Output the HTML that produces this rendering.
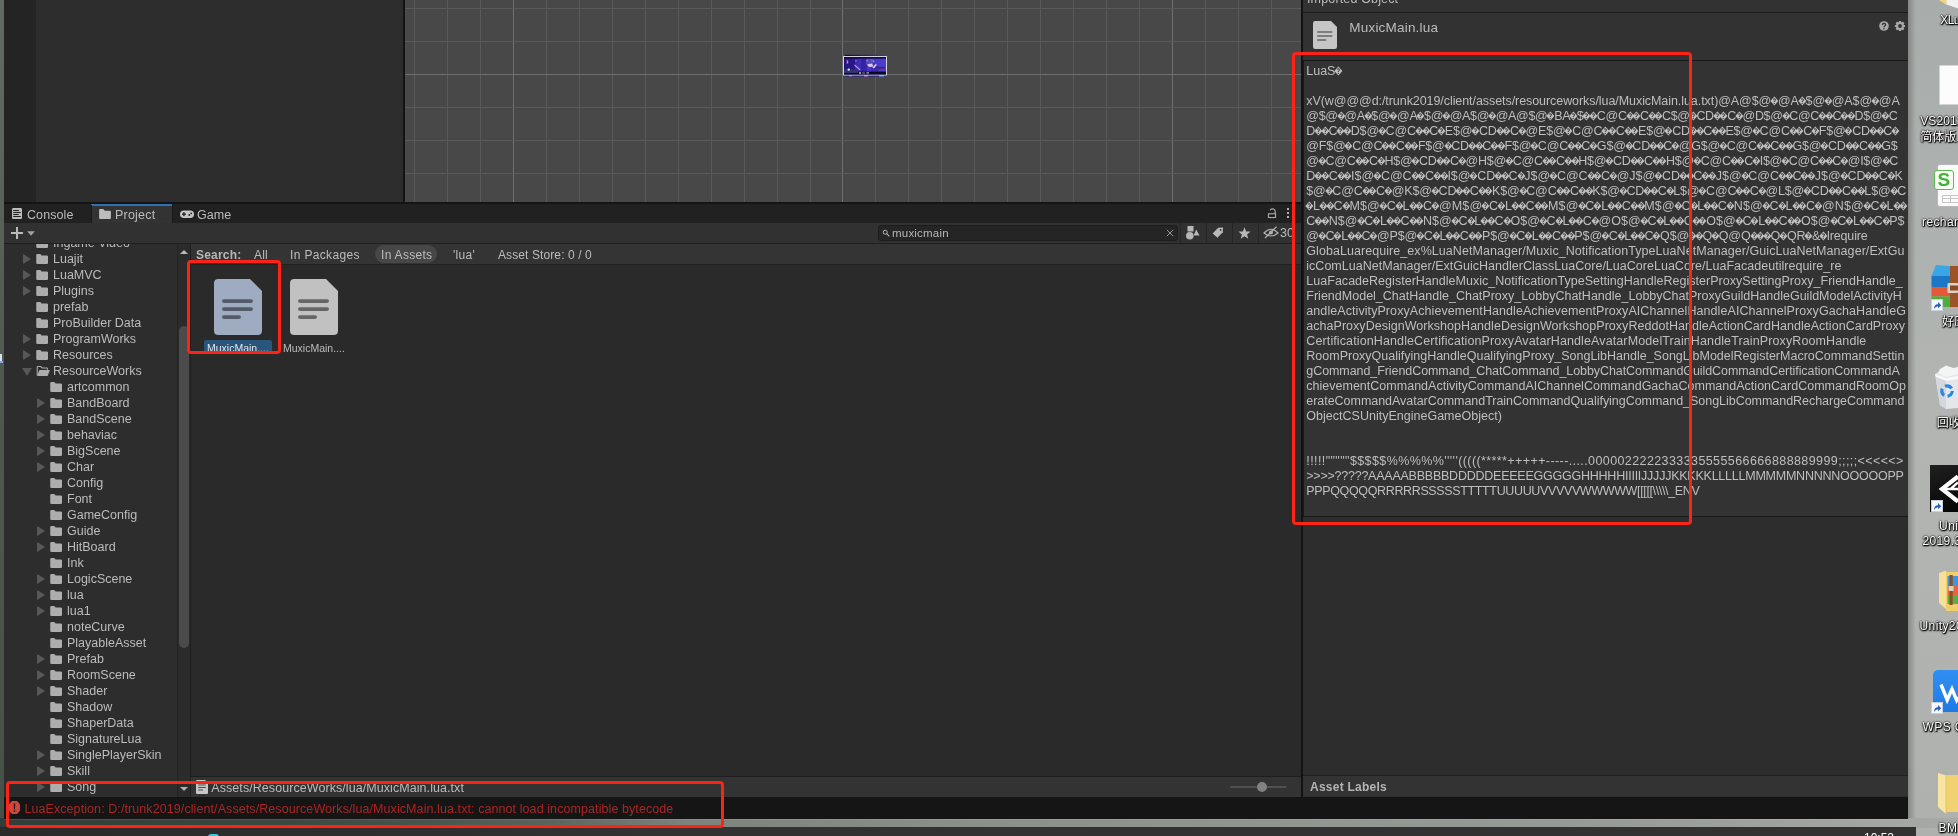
<!DOCTYPE html>
<html lang="en"><head><meta charset="utf-8"><title>Unity</title>
<style>
*{box-sizing:border-box;margin:0;padding:0}
html,body{width:1958px;height:836px;overflow:hidden;background:#9fa49e}
body{position:relative;font-family:"Liberation Sans", "Noto Sans CJK SC", sans-serif;font-size:12.5px;color:#bcbcbc;line-height:16px}
#root{position:absolute;left:0;top:0;width:1958px;height:836px;overflow:hidden;will-change:transform}
.a{position:absolute}
.t{position:absolute;white-space:pre;line-height:16px;height:16px}
.row{position:absolute;left:0;width:173px;height:16px}
.row .ar{position:absolute;top:3px;width:0;height:0;border-left:8px solid #585858;border-top:5px solid transparent;border-bottom:5px solid transparent}
.row .fo{position:absolute;top:3px;width:12.3px;height:10px}
.row .tx{position:absolute;top:0;white-space:pre;letter-spacing:0}
.il{position:absolute;left:1306.3px;white-space:pre;height:15px;line-height:15px;color:#bfbfbf;font-size:12.5px}
.il i{display:inline-block;width:6.7px;font-style:normal;transform:translate(-1px,-.3px) scale(.7,.8);transform-origin:0 58%;letter-spacing:0}
.red{position:absolute;border:3.2px solid #fb2417;border-radius:4px}
.dl{position:absolute;white-space:pre;color:#fff;font-size:12px;line-height:16px;letter-spacing:.45px;text-shadow:0 1px 2px #000,0 0 2px #000,1px 1px 1px #000,0 0 1px #000}
</style></head>
<body>
<div id="root">
<div class="a" style="left:0;top:0;width:5px;height:836px;background:linear-gradient(180deg,#626a64 0,#58625a 25%,#4e5a50 45%,#465046 100%)"></div>
<div class="a" style="left:1907px;top:0;width:51px;height:836px;background:linear-gradient(180deg,#a8adac 0,#b2b5b2 50%,#aeb1ad 100%)"></div>
<div class="a" style="left:1907px;top:0;width:9px;height:827px;background:linear-gradient(90deg,rgba(120,124,120,.85),rgba(150,154,150,0))"></div>
<div class="a" style="left:0;top:818px;width:1958px;height:10px;background:linear-gradient(90deg,#333d37 0,#3c4840 15%,#4a554d 22%,#5a645c 28%,#7c837d 35%,#8a908a 50%,#969a96 80%,#a6a9a5 100%)"></div>
<div class="a" style="left:4px;top:819px;width:1904px;height:1px;background:rgba(255,255,255,.1)"></div>
<div class="a" style="left:0;top:827px;width:1916px;height:9px;background:linear-gradient(90deg,#2a2a2a,#323232 35%)"></div>
<div class="a" style="left:208px;top:834px;width:11px;height:3px;background:#35c8e8;border-radius:3px 3px 0 0"></div>
<div class="t" style="left:1864px;top:830px;color:#fff;font-size:12px">10:52</div>
<div class="a" style="left:4px;top:0;width:1904px;height:819px;background:#2d2d2d;overflow:hidden" id="u">
<div class="a" style="left:0;top:0;width:32px;height:202px;background:#242424"></div>
<div class="a" style="left:32px;top:0;width:367px;height:202px;background:#2d2d2d"></div>
<div class="a" style="left:399px;top:0;width:2px;height:202px;background:#141414"></div>
<svg class="a" style="left:401px;top:0" width="896" height="202" viewBox="0 0 896 202"><rect width="896" height="202" fill="#484848"/><rect x="9" y="0" width="1" height="202" fill="#5a5a5a"/><rect x="42" y="0" width="1" height="202" fill="#5a5a5a"/><rect x="75" y="0" width="1" height="202" fill="#5a5a5a"/><rect x="108" y="0" width="1" height="202" fill="#6e6e6e"/><rect x="141" y="0" width="1" height="202" fill="#5a5a5a"/><rect x="174" y="0" width="1" height="202" fill="#5a5a5a"/><rect x="207" y="0" width="1" height="202" fill="#5a5a5a"/><rect x="240" y="0" width="1" height="202" fill="#5a5a5a"/><rect x="273" y="0" width="1" height="202" fill="#5a5a5a"/><rect x="306" y="0" width="1" height="202" fill="#5a5a5a"/><rect x="339" y="0" width="1" height="202" fill="#5a5a5a"/><rect x="372" y="0" width="1" height="202" fill="#5a5a5a"/><rect x="405" y="0" width="1" height="202" fill="#5a5a5a"/><rect x="437" y="0" width="1" height="202" fill="#6e6e6e"/><rect x="470" y="0" width="1" height="202" fill="#5a5a5a"/><rect x="503" y="0" width="1" height="202" fill="#5a5a5a"/><rect x="536" y="0" width="1" height="202" fill="#5a5a5a"/><rect x="569" y="0" width="1" height="202" fill="#5a5a5a"/><rect x="602" y="0" width="1" height="202" fill="#5a5a5a"/><rect x="635" y="0" width="1" height="202" fill="#5a5a5a"/><rect x="668" y="0" width="1" height="202" fill="#5a5a5a"/><rect x="701" y="0" width="1" height="202" fill="#5a5a5a"/><rect x="734" y="0" width="1" height="202" fill="#5a5a5a"/><rect x="767" y="0" width="1" height="202" fill="#6e6e6e"/><rect x="800" y="0" width="1" height="202" fill="#5a5a5a"/><rect x="833" y="0" width="1" height="202" fill="#5a5a5a"/><rect x="866" y="0" width="1" height="202" fill="#5a5a5a"/><rect x="0" y="8" width="896" height="1" fill="#5a5a5a"/><rect x="0" y="41" width="896" height="1" fill="#5a5a5a"/><rect x="0" y="74" width="896" height="1" fill="#6e6e6e"/><rect x="0" y="107" width="896" height="1" fill="#5a5a5a"/><rect x="0" y="140" width="896" height="1" fill="#5a5a5a"/><rect x="0" y="173" width="896" height="1" fill="#5a5a5a"/></svg>
<svg class="a" style="left:838px;top:54px" width="46" height="24" viewBox="0 0 46 24"><defs><linearGradient id="tg" x1="0" x2="1" y1="0" y2="0"><stop offset="0" stop-color="#2a1a92"/><stop offset=".5" stop-color="#4434c4"/><stop offset="1" stop-color="#4a40cc"/></linearGradient><linearGradient id="tt" x1="0" x2="1" y1="0" y2="0"><stop offset="0" stop-color="#140850"/><stop offset="1" stop-color="#4030b4"/></linearGradient></defs><rect x="3" y="0.8" width="40" height="2" fill="url(#tt)"/><rect x="3" y="21" width="40" height="1.6" fill="#2a2488"/><rect x="7" y="21.2" width="3" height="1.2" fill="#8878d8"/><rect x="22" y="21.2" width="4" height="1.2" fill="#d890d8"/><rect x="37" y="21.2" width="5" height="1.3" fill="#6cb0f0"/><rect x="1.5" y="2.5" width="43" height="18.5" fill="url(#tg)" stroke="#d4d4d4" stroke-width="1"/><rect x="2" y="3" width="42" height="1.6" fill="#120644"/><rect x="2" y="4.6" width="11" height="13" fill="#180a60" opacity=".45"/><rect x="19" y="4.6" width="6" height="13" fill="#1a0c70" opacity=".35"/><rect x="29" y="12" width="8" height="5.6" fill="#2a1c90" opacity=".5"/><rect x="2" y="17.6" width="42" height="2.9" fill="#0b0822"/><rect x="2" y="15.5" width="14" height="3.5" fill="#34346a"/><circle cx="27.5" cy="8.5" r="3.6" fill="#4c52b8"/><path d="M25 10.5 L30 9.5 L31.5 12.5 L27 13Z" fill="#e6c6ee"/><path d="M30.5 13.5 L33.8 10 L34.8 10.8 L31.8 14.5Z" fill="#e8dcf4"/><path d="M13 10.5 L18.5 15.5 L17.5 16.3 L12.2 11.5Z" fill="#c494e0"/><rect x="5" y="6.5" width="1.2" height="3" fill="#e27cf0"/><rect x="4" y="5" width="1" height="5" fill="#5a2a8a"/><circle cx="6.8" cy="15.6" r="1.2" fill="#dfe6ff"/><circle cx="25" cy="6.2" r=".8" fill="#f07ad8"/><circle cx="31.5" cy="7.2" r=".8" fill="#40e0b0"/><circle cx="30" cy="6" r=".7" fill="#f06a6a"/><circle cx="14" cy="7" r=".8" fill="#b07ad8"/><rect x="36" y="13" width="7" height="1.6" fill="#5a2050"/><rect x="17" y="18.3" width="2" height="1.3" fill="#d8d8e8"/><rect x="20" y="18.5" width="3" height="1" fill="#8888a8"/><rect x="24.5" y="18.3" width="2.5" height="1.2" fill="#b8b8d8"/></svg>
<div class="a" style="left:1297px;top:0;width:2px;height:819px;background:#131313"></div>
<div class="a" style="left:0;top:202px;width:1297px;height:2px;background:#141414"></div>
<div class="a" style="left:0;top:204px;width:1297px;height:19px;background:#212121"></div>
<div class="a" style="left:87px;top:204px;width:81px;height:19px;background:#333;border-top:2px solid #2f6fb5"></div>
<div class="a" style="left:87px;top:205px;width:1px;height:18px;background:#1a1a1a"></div>
<div class="a" style="left:168px;top:205px;width:1px;height:18px;background:#1a1a1a"></div>
<svg class="a" style="left:8.1px;top:208px" width="10" height="11" viewBox="0 0 10 11"><rect x="0" y="0" width="10" height="11" rx="1.2" fill="#bcbcbc"/><rect x="1.2" y="2" width="5.6" height="1" fill="#1e1e1e"/><rect x="1.2" y="4" width="7.6" height="1" fill="#1e1e1e"/><rect x="1.2" y="6" width="5.6" height="1" fill="#1e1e1e"/><rect x="1.2" y="8" width="7.6" height="1" fill="#1e1e1e"/></svg>
<div class="t" style="left:23px;top:206.5px;letter-spacing:.08px">Console</div>
<svg class="a" style="left:95.2px;top:209px" width="12" height="10" viewBox="0 0 13 11"><path d="M0 1.2 Q0 0 1.2 0 H4.6 L6.2 1.8 H11.8 Q13 1.8 13 3 V9.8 Q13 11 11.8 11 H1.2 Q0 11 0 9.8Z" fill="#bcbcbc"/></svg>
<div class="t" style="left:111px;top:206.5px;letter-spacing:.2px">Project</div>
<svg class="a" style="left:176px;top:210.3px" width="14" height="8.4" viewBox="0 0 15 9"><rect x="0" y="0.5" width="15" height="8" rx="4" fill="#c4c4c4"/><rect x="2.2" y="3.7" width="4" height="1.5" fill="#222"/><rect x="3.45" y="2.4" width="1.5" height="4.1" fill="#222"/><circle cx="10" cy="5.4" r="1" fill="#222"/><circle cx="12" cy="3.6" r="1" fill="#222"/></svg>
<div class="t" style="left:193px;top:206.5px;letter-spacing:.05px">Game</div>
<svg class="a" style="left:1263px;top:207px" width="10" height="12" viewBox="0 0 10 12"><path d="M8.2 6.4 V4.2 A2.7 2.7 0 0 0 3.1 3.3" fill="none" stroke="#a8a8a8" stroke-width="1.2"/><rect x="1.5" y="6.8" width="7" height="3.7" fill="#161616" stroke="#a8a8a8" stroke-width="1.2"/></svg>
<div class="a" style="left:1282.8px;top:208.1px;width:2.3px;height:2.1px;background:#b2b2b2"></div>
<div class="a" style="left:1282.8px;top:211.9px;width:2.3px;height:2.1px;background:#b2b2b2"></div>
<div class="a" style="left:1282.8px;top:215.8px;width:2.3px;height:2.1px;background:#b2b2b2"></div>
<div class="a" style="left:0;top:223px;width:1297px;height:20px;background:#313131"></div>
<div class="a" style="left:0;top:243px;width:1297px;height:1px;background:#1f1f1f"></div>
<div class="a" style="left:7px;top:232px;width:12px;height:2px;background:#bababa"></div>
<div class="a" style="left:12px;top:227px;width:2px;height:12px;background:#bababa"></div>
<svg class="a" style="left:23.1px;top:230.6px" width="8" height="5" viewBox="0 0 8 5"><path d="M0.2 0.2 H7.8 L4 4.8Z" fill="#a2a2a2"/></svg>
<div class="a" style="left:874px;top:225px;width:300px;height:16px;background:#252525;border:1px solid #1c1c1c;border-radius:3px"></div>
<svg class="a" style="left:878px;top:229px" width="8" height="8" viewBox="0 0 8 8"><circle cx="3.2" cy="3.2" r="2" fill="none" stroke="#b4b4b4" stroke-width="1"/><path d="M4.7 4.7 L7.4 7.4" stroke="#b4b4b4" stroke-width="1.2"/></svg>
<div class="t" style="left:888px;top:225.3px;font-size:11.5px;letter-spacing:.2px;color:#b8b8b8">muxicmain</div>
<svg class="a" style="left:1162px;top:229px" width="8" height="8" viewBox="0 0 8 8"><path d="M0.8 0.8 L7.2 7.2 M7.2 0.8 L0.8 7.2" stroke="#a4a4a4" stroke-width="0.9"/></svg>
<div class="a" style="left:1176px;top:223px;width:1px;height:20px;background:#262626"></div>
<div class="a" style="left:1202px;top:223px;width:1px;height:20px;background:#262626"></div>
<div class="a" style="left:1228px;top:223px;width:1px;height:20px;background:#262626"></div>
<div class="a" style="left:1254px;top:223px;width:1px;height:20px;background:#262626"></div>
<svg class="a" style="left:1182px;top:226px" width="14" height="14" viewBox="0 0 14 14"><rect x="1.5" y="0" width="6" height="5.5" fill="#b8b8b8"/><circle cx="3.8" cy="9.8" r="3.8" fill="#b8b8b8"/><path d="M10.2 3.5 L13.5 9.5 H7.6Z" fill="#b8b8b8"/></svg>
<svg class="a" style="left:1208px;top:227px" width="12" height="12" viewBox="0 0 12 12"><path d="M6.2 0.8 L11 0.4 L10.8 5.2 L5.4 10.8 L0.6 6.4Z" fill="#b8b8b8"/><circle cx="8.6" cy="2.9" r="0.9" fill="#333"/></svg>
<svg class="a" style="left:1234px;top:227px" width="13" height="12" viewBox="0 0 13 12"><path d="M6.5 0.3 L8.1 4.4 L12.6 4.6 L9.1 7.4 L10.3 11.7 L6.5 9.3 L2.7 11.7 L3.9 7.4 L0.4 4.6 L4.9 4.4Z" fill="#b8b8b8"/></svg>
<svg class="a" style="left:1259px;top:226px" width="16" height="13" viewBox="0 0 16 13"><path d="M1 7 Q8 -0.5 15 7 Q8 13 1 7Z" fill="none" stroke="#b0b0b0" stroke-width="1.2"/><circle cx="8" cy="6.6" r="2" fill="#b0b0b0"/><path d="M2 12 L13.5 0.8" stroke="#b0b0b0" stroke-width="1.3"/></svg>
<div class="t" style="left:1276px;top:225px;width:21px;overflow:hidden;font-size:12.5px">30</div>
<div class="a" style="left:0;top:244px;width:173px;height:553px;background:#2d2d2d;overflow:hidden" id="tree">
<div class="row" style="top:-9px"><svg class="fo" style="left:32px" viewBox="0 0 13 11"><path d="M0 1.2 Q0 0 1.2 0 H4.4 L6 1.7 H11.8 Q13 1.7 13 2.9 V9.8 Q13 11 11.8 11 H1.2 Q0 11 0 9.8Z" fill="#adadad"/></svg><div class="tx" style="left:49px">Ingame Video</div></div>
<div class="row" style="top:7px"><div class="ar" style="left:19px"></div><svg class="fo" style="left:32px" viewBox="0 0 13 11"><path d="M0 1.2 Q0 0 1.2 0 H4.4 L6 1.7 H11.8 Q13 1.7 13 2.9 V9.8 Q13 11 11.8 11 H1.2 Q0 11 0 9.8Z" fill="#adadad"/></svg><div class="tx" style="left:49px">Luajit</div></div>
<div class="row" style="top:23px"><div class="ar" style="left:19px"></div><svg class="fo" style="left:32px" viewBox="0 0 13 11"><path d="M0 1.2 Q0 0 1.2 0 H4.4 L6 1.7 H11.8 Q13 1.7 13 2.9 V9.8 Q13 11 11.8 11 H1.2 Q0 11 0 9.8Z" fill="#adadad"/></svg><div class="tx" style="left:49px">LuaMVC</div></div>
<div class="row" style="top:39px"><div class="ar" style="left:19px"></div><svg class="fo" style="left:32px" viewBox="0 0 13 11"><path d="M0 1.2 Q0 0 1.2 0 H4.4 L6 1.7 H11.8 Q13 1.7 13 2.9 V9.8 Q13 11 11.8 11 H1.2 Q0 11 0 9.8Z" fill="#adadad"/></svg><div class="tx" style="left:49px">Plugins</div></div>
<div class="row" style="top:55px"><svg class="fo" style="left:32px" viewBox="0 0 13 11"><path d="M0 1.2 Q0 0 1.2 0 H4.4 L6 1.7 H11.8 Q13 1.7 13 2.9 V9.8 Q13 11 11.8 11 H1.2 Q0 11 0 9.8Z" fill="#adadad"/></svg><div class="tx" style="left:49px">prefab</div></div>
<div class="row" style="top:71px"><svg class="fo" style="left:32px" viewBox="0 0 13 11"><path d="M0 1.2 Q0 0 1.2 0 H4.4 L6 1.7 H11.8 Q13 1.7 13 2.9 V9.8 Q13 11 11.8 11 H1.2 Q0 11 0 9.8Z" fill="#adadad"/></svg><div class="tx" style="left:49px">ProBuilder Data</div></div>
<div class="row" style="top:87px"><div class="ar" style="left:19px"></div><svg class="fo" style="left:32px" viewBox="0 0 13 11"><path d="M0 1.2 Q0 0 1.2 0 H4.4 L6 1.7 H11.8 Q13 1.7 13 2.9 V9.8 Q13 11 11.8 11 H1.2 Q0 11 0 9.8Z" fill="#adadad"/></svg><div class="tx" style="left:49px">ProgramWorks</div></div>
<div class="row" style="top:103px"><div class="ar" style="left:19px"></div><svg class="fo" style="left:32px" viewBox="0 0 13 11"><path d="M0 1.2 Q0 0 1.2 0 H4.4 L6 1.7 H11.8 Q13 1.7 13 2.9 V9.8 Q13 11 11.8 11 H1.2 Q0 11 0 9.8Z" fill="#adadad"/></svg><div class="tx" style="left:49px">Resources</div></div>
<div class="row" style="top:119px"><div class="a" style="left:18px;top:5px;width:0;height:0;border-top:8px solid #585858;border-left:5px solid transparent;border-right:5px solid transparent"></div><svg class="fo" style="left:32px;width:15px" viewBox="0 0 15 11"><path d="M0.6 10.4 V1.2 Q0.6 0.6 1.2 0.6 H4.4 L6 2.2 H11.2 Q11.8 2.2 11.8 2.8 V4.2" fill="none" stroke="#adadad" stroke-width="1.2"/><path d="M3 4.4 H14.6 L12 11 H0.4Z" fill="#adadad"/></svg><div class="tx" style="left:49px">ResourceWorks</div></div>
<div class="row" style="top:135px"><svg class="fo" style="left:46px" viewBox="0 0 13 11"><path d="M0 1.2 Q0 0 1.2 0 H4.4 L6 1.7 H11.8 Q13 1.7 13 2.9 V9.8 Q13 11 11.8 11 H1.2 Q0 11 0 9.8Z" fill="#adadad"/></svg><div class="tx" style="left:63px">artcommon</div></div>
<div class="row" style="top:151px"><div class="ar" style="left:33px"></div><svg class="fo" style="left:46px" viewBox="0 0 13 11"><path d="M0 1.2 Q0 0 1.2 0 H4.4 L6 1.7 H11.8 Q13 1.7 13 2.9 V9.8 Q13 11 11.8 11 H1.2 Q0 11 0 9.8Z" fill="#adadad"/></svg><div class="tx" style="left:63px">BandBoard</div></div>
<div class="row" style="top:167px"><div class="ar" style="left:33px"></div><svg class="fo" style="left:46px" viewBox="0 0 13 11"><path d="M0 1.2 Q0 0 1.2 0 H4.4 L6 1.7 H11.8 Q13 1.7 13 2.9 V9.8 Q13 11 11.8 11 H1.2 Q0 11 0 9.8Z" fill="#adadad"/></svg><div class="tx" style="left:63px">BandScene</div></div>
<div class="row" style="top:183px"><div class="ar" style="left:33px"></div><svg class="fo" style="left:46px" viewBox="0 0 13 11"><path d="M0 1.2 Q0 0 1.2 0 H4.4 L6 1.7 H11.8 Q13 1.7 13 2.9 V9.8 Q13 11 11.8 11 H1.2 Q0 11 0 9.8Z" fill="#adadad"/></svg><div class="tx" style="left:63px">behaviac</div></div>
<div class="row" style="top:199px"><div class="ar" style="left:33px"></div><svg class="fo" style="left:46px" viewBox="0 0 13 11"><path d="M0 1.2 Q0 0 1.2 0 H4.4 L6 1.7 H11.8 Q13 1.7 13 2.9 V9.8 Q13 11 11.8 11 H1.2 Q0 11 0 9.8Z" fill="#adadad"/></svg><div class="tx" style="left:63px">BigScene</div></div>
<div class="row" style="top:215px"><div class="ar" style="left:33px"></div><svg class="fo" style="left:46px" viewBox="0 0 13 11"><path d="M0 1.2 Q0 0 1.2 0 H4.4 L6 1.7 H11.8 Q13 1.7 13 2.9 V9.8 Q13 11 11.8 11 H1.2 Q0 11 0 9.8Z" fill="#adadad"/></svg><div class="tx" style="left:63px">Char</div></div>
<div class="row" style="top:231px"><svg class="fo" style="left:46px" viewBox="0 0 13 11"><path d="M0 1.2 Q0 0 1.2 0 H4.4 L6 1.7 H11.8 Q13 1.7 13 2.9 V9.8 Q13 11 11.8 11 H1.2 Q0 11 0 9.8Z" fill="#adadad"/></svg><div class="tx" style="left:63px">Config</div></div>
<div class="row" style="top:247px"><svg class="fo" style="left:46px" viewBox="0 0 13 11"><path d="M0 1.2 Q0 0 1.2 0 H4.4 L6 1.7 H11.8 Q13 1.7 13 2.9 V9.8 Q13 11 11.8 11 H1.2 Q0 11 0 9.8Z" fill="#adadad"/></svg><div class="tx" style="left:63px">Font</div></div>
<div class="row" style="top:263px"><svg class="fo" style="left:46px" viewBox="0 0 13 11"><path d="M0 1.2 Q0 0 1.2 0 H4.4 L6 1.7 H11.8 Q13 1.7 13 2.9 V9.8 Q13 11 11.8 11 H1.2 Q0 11 0 9.8Z" fill="#adadad"/></svg><div class="tx" style="left:63px">GameConfig</div></div>
<div class="row" style="top:279px"><div class="ar" style="left:33px"></div><svg class="fo" style="left:46px" viewBox="0 0 13 11"><path d="M0 1.2 Q0 0 1.2 0 H4.4 L6 1.7 H11.8 Q13 1.7 13 2.9 V9.8 Q13 11 11.8 11 H1.2 Q0 11 0 9.8Z" fill="#adadad"/></svg><div class="tx" style="left:63px">Guide</div></div>
<div class="row" style="top:295px"><div class="ar" style="left:33px"></div><svg class="fo" style="left:46px" viewBox="0 0 13 11"><path d="M0 1.2 Q0 0 1.2 0 H4.4 L6 1.7 H11.8 Q13 1.7 13 2.9 V9.8 Q13 11 11.8 11 H1.2 Q0 11 0 9.8Z" fill="#adadad"/></svg><div class="tx" style="left:63px">HitBoard</div></div>
<div class="row" style="top:311px"><svg class="fo" style="left:46px" viewBox="0 0 13 11"><path d="M0 1.2 Q0 0 1.2 0 H4.4 L6 1.7 H11.8 Q13 1.7 13 2.9 V9.8 Q13 11 11.8 11 H1.2 Q0 11 0 9.8Z" fill="#adadad"/></svg><div class="tx" style="left:63px">Ink</div></div>
<div class="row" style="top:327px"><div class="ar" style="left:33px"></div><svg class="fo" style="left:46px" viewBox="0 0 13 11"><path d="M0 1.2 Q0 0 1.2 0 H4.4 L6 1.7 H11.8 Q13 1.7 13 2.9 V9.8 Q13 11 11.8 11 H1.2 Q0 11 0 9.8Z" fill="#adadad"/></svg><div class="tx" style="left:63px">LogicScene</div></div>
<div class="row" style="top:343px"><div class="ar" style="left:33px"></div><svg class="fo" style="left:46px" viewBox="0 0 13 11"><path d="M0 1.2 Q0 0 1.2 0 H4.4 L6 1.7 H11.8 Q13 1.7 13 2.9 V9.8 Q13 11 11.8 11 H1.2 Q0 11 0 9.8Z" fill="#adadad"/></svg><div class="tx" style="left:63px">lua</div></div>
<div class="row" style="top:359px"><div class="ar" style="left:33px"></div><svg class="fo" style="left:46px" viewBox="0 0 13 11"><path d="M0 1.2 Q0 0 1.2 0 H4.4 L6 1.7 H11.8 Q13 1.7 13 2.9 V9.8 Q13 11 11.8 11 H1.2 Q0 11 0 9.8Z" fill="#adadad"/></svg><div class="tx" style="left:63px">lua1</div></div>
<div class="row" style="top:375px"><svg class="fo" style="left:46px" viewBox="0 0 13 11"><path d="M0 1.2 Q0 0 1.2 0 H4.4 L6 1.7 H11.8 Q13 1.7 13 2.9 V9.8 Q13 11 11.8 11 H1.2 Q0 11 0 9.8Z" fill="#adadad"/></svg><div class="tx" style="left:63px">noteCurve</div></div>
<div class="row" style="top:391px"><svg class="fo" style="left:46px" viewBox="0 0 13 11"><path d="M0 1.2 Q0 0 1.2 0 H4.4 L6 1.7 H11.8 Q13 1.7 13 2.9 V9.8 Q13 11 11.8 11 H1.2 Q0 11 0 9.8Z" fill="#adadad"/></svg><div class="tx" style="left:63px">PlayableAsset</div></div>
<div class="row" style="top:407px"><div class="ar" style="left:33px"></div><svg class="fo" style="left:46px" viewBox="0 0 13 11"><path d="M0 1.2 Q0 0 1.2 0 H4.4 L6 1.7 H11.8 Q13 1.7 13 2.9 V9.8 Q13 11 11.8 11 H1.2 Q0 11 0 9.8Z" fill="#adadad"/></svg><div class="tx" style="left:63px">Prefab</div></div>
<div class="row" style="top:423px"><div class="ar" style="left:33px"></div><svg class="fo" style="left:46px" viewBox="0 0 13 11"><path d="M0 1.2 Q0 0 1.2 0 H4.4 L6 1.7 H11.8 Q13 1.7 13 2.9 V9.8 Q13 11 11.8 11 H1.2 Q0 11 0 9.8Z" fill="#adadad"/></svg><div class="tx" style="left:63px">RoomScene</div></div>
<div class="row" style="top:439px"><div class="ar" style="left:33px"></div><svg class="fo" style="left:46px" viewBox="0 0 13 11"><path d="M0 1.2 Q0 0 1.2 0 H4.4 L6 1.7 H11.8 Q13 1.7 13 2.9 V9.8 Q13 11 11.8 11 H1.2 Q0 11 0 9.8Z" fill="#adadad"/></svg><div class="tx" style="left:63px">Shader</div></div>
<div class="row" style="top:455px"><svg class="fo" style="left:46px" viewBox="0 0 13 11"><path d="M0 1.2 Q0 0 1.2 0 H4.4 L6 1.7 H11.8 Q13 1.7 13 2.9 V9.8 Q13 11 11.8 11 H1.2 Q0 11 0 9.8Z" fill="#adadad"/></svg><div class="tx" style="left:63px">Shadow</div></div>
<div class="row" style="top:471px"><svg class="fo" style="left:46px" viewBox="0 0 13 11"><path d="M0 1.2 Q0 0 1.2 0 H4.4 L6 1.7 H11.8 Q13 1.7 13 2.9 V9.8 Q13 11 11.8 11 H1.2 Q0 11 0 9.8Z" fill="#adadad"/></svg><div class="tx" style="left:63px">ShaperData</div></div>
<div class="row" style="top:487px"><svg class="fo" style="left:46px" viewBox="0 0 13 11"><path d="M0 1.2 Q0 0 1.2 0 H4.4 L6 1.7 H11.8 Q13 1.7 13 2.9 V9.8 Q13 11 11.8 11 H1.2 Q0 11 0 9.8Z" fill="#adadad"/></svg><div class="tx" style="left:63px">SignatureLua</div></div>
<div class="row" style="top:503px"><div class="ar" style="left:33px"></div><svg class="fo" style="left:46px" viewBox="0 0 13 11"><path d="M0 1.2 Q0 0 1.2 0 H4.4 L6 1.7 H11.8 Q13 1.7 13 2.9 V9.8 Q13 11 11.8 11 H1.2 Q0 11 0 9.8Z" fill="#adadad"/></svg><div class="tx" style="left:63px">SinglePlayerSkin</div></div>
<div class="row" style="top:519px"><div class="ar" style="left:33px"></div><svg class="fo" style="left:46px" viewBox="0 0 13 11"><path d="M0 1.2 Q0 0 1.2 0 H4.4 L6 1.7 H11.8 Q13 1.7 13 2.9 V9.8 Q13 11 11.8 11 H1.2 Q0 11 0 9.8Z" fill="#adadad"/></svg><div class="tx" style="left:63px">Skill</div></div>
<div class="row" style="top:535px"><div class="ar" style="left:33px"></div><svg class="fo" style="left:46px" viewBox="0 0 13 11"><path d="M0 1.2 Q0 0 1.2 0 H4.4 L6 1.7 H11.8 Q13 1.7 13 2.9 V9.8 Q13 11 11.8 11 H1.2 Q0 11 0 9.8Z" fill="#adadad"/></svg><div class="tx" style="left:63px">Song</div></div>
</div>
<div class="a" style="left:173px;top:244px;width:14px;height:553px;background:#2b2b2b;border-left:1px solid #242424"></div>
<div class="a" style="left:175px;top:326px;width:10px;height:322px;background:#4b4b4b;border-radius:5px"></div>
<div class="a" style="left:176px;top:250px;width:0;height:0;border-bottom:4px solid #b8b8b8;border-left:4px solid transparent;border-right:4px solid transparent"></div>
<div class="a" style="left:176px;top:787px;width:0;height:0;border-top:4.3px solid #b0b0b0;border-left:4px solid transparent;border-right:4px solid transparent"></div>
<div class="a" style="left:186px;top:244px;width:1px;height:553px;background:#1f1f1f"></div>
<div class="a" style="left:187px;top:244px;width:1110px;height:20px;background:#343434"></div>
<div class="a" style="left:187px;top:264px;width:1110px;height:1px;background:#222"></div>
<div class="a" style="left:187px;top:265px;width:1110px;height:511px;background:#2a2a2a"></div>
<div class="t" style="left:192px;top:246.5px;font-weight:bold;font-size:12px;letter-spacing:.2px;color:#b6b6b6">Search:</div>
<div class="t" style="left:250px;top:246.5px;font-size:12px;letter-spacing:.2px">All</div>
<div class="t" style="left:286px;top:246.5px;font-size:12px;letter-spacing:.35px">In Packages</div>
<div class="a" style="left:371px;top:245px;width:62px;height:18px;background:#474747;border-radius:9px"></div>
<div class="t" style="left:377px;top:246.5px;font-size:12px;letter-spacing:.3px">In Assets</div>
<div class="t" style="left:449px;top:246.5px;font-size:12px;letter-spacing:.3px">'lua'</div>
<div class="t" style="left:494px;top:246.5px;font-size:12px;letter-spacing:.1px">Asset Store: 0 / 0</div>
<svg class="a" style="left:210.0px;top:279.0px" width="48" height="56" viewBox="0 0 48 56"><path d="M4.3 0 H36.0 L48 12.0 V51.7 Q48 56 43.7 56 H4.3 Q0 56 0 51.7 V4.3 Q0 0 4.3 0Z" fill="#9fabc0"/><rect x="8.0" y="20.3" width="31.0" height="3.6" rx="1.8" fill="#535b69"/><rect x="8.0" y="28.3" width="31.0" height="3.6" rx="1.8" fill="#535b69"/><rect x="8.0" y="36.3" width="19.0" height="3.6" rx="1.8" fill="#535b69"/></svg>
<svg class="a" style="left:286.0px;top:279.0px" width="48" height="56" viewBox="0 0 48 56"><path d="M4.3 0 H36.0 L48 12.0 V51.7 Q48 56 43.7 56 H4.3 Q0 56 0 51.7 V4.3 Q0 0 4.3 0Z" fill="#c1c1c1"/><rect x="8.0" y="20.3" width="31.0" height="3.6" rx="1.8" fill="#666666"/><rect x="8.0" y="28.3" width="31.0" height="3.6" rx="1.8" fill="#666666"/><rect x="8.0" y="36.3" width="19.0" height="3.6" rx="1.8" fill="#666666"/></svg>
<div class="a" style="left:200px;top:340px;width:68px;height:13.6px;background:#29547c;border-radius:2px"></div>
<div class="t" style="left:203px;top:340px;font-size:10.5px;letter-spacing:0;color:#e4e4e4">MuxicMain....</div>
<div class="t" style="left:279px;top:340px;font-size:10.5px;letter-spacing:0">MuxicMain....</div>
<div class="a" style="left:187px;top:776px;width:1110px;height:21px;background:#333;border-top:1px solid #1e1e1e"></div>
<svg class="a" style="left:191.8px;top:780.0px" width="12" height="14" viewBox="0 0 12 14"><path d="M1.1 0 H9.0 L12 3.0 V12.9 Q12 14 10.9 14 H1.1 Q0 14 0 12.9 V1.1 Q0 0 1.1 0Z" fill="#c8c8c8"/><rect x="2.0" y="4.5" width="7.8" height="1.0" rx="0.5" fill="#4a4a4a"/><rect x="2.0" y="7.0" width="7.8" height="1.0" rx="0.5" fill="#4a4a4a"/><rect x="2.0" y="9.5" width="5.0" height="1.0" rx="0.5" fill="#4a4a4a"/></svg>
<div class="t" style="left:207.3px;top:779.6px;font-size:12.5px;letter-spacing:.067px">Assets/ResourceWorks/lua/MuxicMain.lua.txt</div>
<div class="a" style="left:1226px;top:786px;width:56px;height:2px;background:#505050"></div>
<div class="a" style="left:1253px;top:782px;width:10px;height:10px;background:#818181;border-radius:5px"></div>
<div class="a" style="left:1299px;top:0;width:605px;height:12px;background:#323232"></div>
<div class="t" style="left:1303px;top:-9.5px;font-size:12.5px;letter-spacing:.15px">Imported Object</div>
<div class="a" style="left:1299px;top:12px;width:605px;height:1px;background:#1c1c1c"></div>
<div class="a" style="left:1299px;top:13px;width:605px;height:47px;background:#323232"></div>
<svg class="a" style="left:1309.0px;top:21.0px" width="24" height="28" viewBox="0 0 24 28"><path d="M2.2 0 H18.0 L24 6.0 V25.8 Q24 28 21.8 28 H2.2 Q0 28 0 25.8 V2.2 Q0 0 2.2 0Z" fill="#c6c6c6"/><rect x="4.0" y="10.2" width="15.5" height="1.6" rx="0.8" fill="#666"/><rect x="4.0" y="14.2" width="15.5" height="1.6" rx="0.8" fill="#666"/><rect x="4.0" y="18.2" width="9.5" height="1.6" rx="0.8" fill="#666"/></svg>
<div class="t" style="left:1345.3px;top:19.7px;font-size:13.5px;letter-spacing:.2px;color:#bcbcbc">MuxicMain.lua</div>
<svg class="a" style="left:1875px;top:21px" width="10" height="10" viewBox="0 0 10 10"><circle cx="5" cy="5" r="4.8" fill="#a8a8a8"/><path d="M3.4 3.9 Q3.4 2.3 5 2.3 Q6.6 2.3 6.6 3.7 Q6.6 4.6 5.6 5.1 Q5 5.4 5 6.2" fill="none" stroke="#323232" stroke-width="1.2"/><circle cx="5" cy="7.7" r="0.7" fill="#323232"/></svg>
<svg class="a" style="left:1890.0px;top:20px" width="12" height="12" viewBox="0 0 12 12"><g fill="#a8a8a8"><circle cx="6" cy="6" r="3.9"/><rect x="4.9" y="0.9" width="2.2" height="10.2" rx=".3" transform="rotate(0 6 6)"/><rect x="4.9" y="0.9" width="2.2" height="10.2" rx=".3" transform="rotate(45 6 6)"/><rect x="4.9" y="0.9" width="2.2" height="10.2" rx=".3" transform="rotate(90 6 6)"/><rect x="4.9" y="0.9" width="2.2" height="10.2" rx=".3" transform="rotate(135 6 6)"/></g><circle cx="6" cy="6" r="1.9" fill="#313131"/></svg>
<div class="a" style="left:1299px;top:60px;width:605px;height:457px;background:#333;border:1px solid #191919;border-right:0"></div>
<div class="a" style="left:1299px;top:517px;width:605px;height:258px;background:#2d2d2d"></div>
<div class="a" style="left:1299px;top:775px;width:605px;height:21.4px;background:#333;border-top:1px solid #1f1f1f"></div>
<div class="t" style="left:1306px;top:778.7px;font-size:12px;font-weight:bold;letter-spacing:.25px;color:#b4b4b4">Asset Labels</div>
<div class="il" style="left:1302.3px;top:63.5px;letter-spacing:-0.023px">LuaS<i>�</i></div>
<div class="il" style="left:1302.3px;top:93.5px;letter-spacing:-0.068px">xV(w@@@d:/trunk2019/client/assets/resourceworks/lua/MuxicMain.lua.txt)@A@$@<i>�</i>@A<i>�</i>$@<i>�</i>@A$@<i>�</i>@A</div>
<div class="il" style="left:1302.3px;top:108.5px;letter-spacing:-0.335px">@$@<i>�</i>@A<i>�</i>$@<i>�</i>@A<i>�</i>$@<i>�</i>@A$@<i>�</i>@A@$@<i>�</i>BA<i>�</i>$<i>�</i><i>�</i>C@C<i>�</i><i>�</i>C<i>�</i><i>�</i>C$@<i>�</i>CD<i>�</i><i>�</i>C<i>�</i>@D$@<i>�</i>C@C<i>�</i><i>�</i>C<i>�</i><i>�</i>D$@<i>�</i>C</div>
<div class="il" style="left:1302.3px;top:123.5px;letter-spacing:-0.176px">D<i>�</i><i>�</i>C<i>�</i><i>�</i>D$@<i>�</i>C@C<i>�</i><i>�</i>C<i>�</i>E$@<i>�</i>CD<i>�</i><i>�</i>C<i>�</i>@E$@<i>�</i>C@C<i>�</i><i>�</i>C<i>�</i><i>�</i>E$@<i>�</i>CD<i>�</i><i>�</i>C<i>�</i><i>�</i>E$@<i>�</i>C@C<i>�</i><i>�</i>C<i>�</i>F$@<i>�</i>CD<i>�</i><i>�</i>C<i>�</i></div>
<div class="il" style="left:1302.3px;top:138.5px;letter-spacing:-0.202px">@F$@<i>�</i>C@C<i>�</i><i>�</i>C<i>�</i><i>�</i>F$@<i>�</i>CD<i>�</i><i>�</i>C<i>�</i><i>�</i>F$@<i>�</i>C@C<i>�</i><i>�</i>C<i>�</i>G$@<i>�</i>CD<i>�</i><i>�</i>C<i>�</i>@G$@<i>�</i>C@C<i>�</i><i>�</i>C<i>�</i><i>�</i>G$@<i>�</i>CD<i>�</i><i>�</i>C<i>�</i><i>�</i>G$</div>
<div class="il" style="left:1302.3px;top:153.5px;letter-spacing:-0.232px">@<i>�</i>C@C<i>�</i><i>�</i>C<i>�</i>H$@<i>�</i>CD<i>�</i><i>�</i>C<i>�</i>@H$@<i>�</i>C@C<i>�</i><i>�</i>C<i>�</i><i>�</i>H$@<i>�</i>CD<i>�</i><i>�</i>C<i>�</i><i>�</i>H$@<i>�</i>C@C<i>�</i><i>�</i>C<i>�</i>I$@<i>�</i>C@C<i>�</i><i>�</i>C<i>�</i>@I$@<i>�</i>C</div>
<div class="il" style="left:1302.3px;top:168.5px;letter-spacing:-0.009px">D<i>�</i><i>�</i>C<i>�</i><i>�</i>I$@<i>�</i>C@C<i>�</i><i>�</i>C<i>�</i><i>�</i>I$@<i>�</i>CD<i>�</i><i>�</i>C<i>�</i>J$@<i>�</i>C@C<i>�</i><i>�</i>C<i>�</i>@J$@<i>�</i>CD<i>�</i><i>�</i>C<i>�</i><i>�</i>J$@<i>�</i>C@C<i>�</i><i>�</i>C<i>�</i><i>�</i>J$@<i>�</i>CD<i>�</i><i>�</i>C<i>�</i>K</div>
<div class="il" style="left:1302.3px;top:183.5px;letter-spacing:-0.136px">$@<i>�</i>C@C<i>�</i><i>�</i>C<i>�</i>@K$@<i>�</i>CD<i>�</i><i>�</i>C<i>�</i><i>�</i>K$@<i>�</i>C@C<i>�</i><i>�</i>C<i>�</i><i>�</i>K$@<i>�</i>CD<i>�</i><i>�</i>C<i>�</i>L$@<i>�</i>C@C<i>�</i><i>�</i>C<i>�</i>@L$@<i>�</i>CD<i>�</i><i>�</i>C<i>�</i><i>�</i>L$@<i>�</i>C</div>
<div class="il" style="left:1302.3px;top:198.5px;letter-spacing:0.167px"><i>�</i>L<i>�</i><i>�</i>C<i>�</i>M$@<i>�</i>C<i>�</i>L<i>�</i><i>�</i>C<i>�</i>@M$@<i>�</i>C<i>�</i>L<i>�</i><i>�</i>C<i>�</i><i>�</i>M$@<i>�</i>C<i>�</i>L<i>�</i><i>�</i>C<i>�</i><i>�</i>M$@<i>�</i>C<i>�</i>L<i>�</i><i>�</i>C<i>�</i>N$@<i>�</i>C<i>�</i>L<i>�</i><i>�</i>C<i>�</i>@N$@<i>�</i>C<i>�</i>L<i>�</i><i>�</i></div>
<div class="il" style="left:1302.3px;top:213.5px;letter-spacing:0.052px">C<i>�</i><i>�</i>N$@<i>�</i>C<i>�</i>L<i>�</i><i>�</i>C<i>�</i><i>�</i>N$@<i>�</i>C<i>�</i>L<i>�</i><i>�</i>C<i>�</i>O$@<i>�</i>C<i>�</i>L<i>�</i><i>�</i>C<i>�</i>@O$@<i>�</i>C<i>�</i>L<i>�</i><i>�</i>C<i>�</i><i>�</i>O$@<i>�</i>C<i>�</i>L<i>�</i><i>�</i>C<i>�</i><i>�</i>O$@<i>�</i>C<i>�</i>L<i>�</i><i>�</i>C<i>�</i>P$</div>
<div class="il" style="left:1302.3px;top:228.5px;letter-spacing:-0.123px">@<i>�</i>C<i>�</i>L<i>�</i><i>�</i>C<i>�</i>@P$@<i>�</i>C<i>�</i>L<i>�</i><i>�</i>C<i>�</i><i>�</i>P$@<i>�</i>C<i>�</i>L<i>�</i><i>�</i>C<i>�</i><i>�</i>P$@<i>�</i>C<i>�</i>L<i>�</i><i>�</i>C<i>�</i>Q$@<i>�</i><i>�</i>Q<i>�</i>Q@Q<i>�</i><i>�</i><i>�</i>Q<i>�</i>QR<i>�</i>&amp;<i>�</i>lrequire</div>
<div class="il" style="left:1302.3px;top:243.5px;letter-spacing:0.059px">GlobaLuarequire_ex%LuaNetManager/Muxic_NotificationTypeLuaNetManager/GuicLuaNetManager/ExtGu</div>
<div class="il" style="left:1302.3px;top:258.5px;letter-spacing:0.018px">icComLuaNetManager/ExtGuicHandlerClassLuaCore/LuaCoreLuaCore/LuaFacadeutilrequire_re</div>
<div class="il" style="left:1302.3px;top:273.5px;letter-spacing:0.025px">LuaFacadeRegisterHandleMuxic_NotificationTypeSettingHandleRegisterProxySettingProxy_FriendHandle_</div>
<div class="il" style="left:1302.3px;top:288.5px;letter-spacing:0.009px">FriendModel_ChatHandle_ChatProxy_LobbyChatHandle_LobbyChatProxyGuildHandleGuildModelActivityH</div>
<div class="il" style="left:1302.3px;top:303.5px;letter-spacing:0.076px">andleActivityProxyAchievementHandleAchievementProxyAIChannelHandleAIChannelProxyGachaHandleG</div>
<div class="il" style="left:1302.3px;top:318.5px;letter-spacing:0.033px">achaProxyDesignWorkshopHandleDesignWorkshopProxyReddotHandleActionCardHandleActionCardProxy</div>
<div class="il" style="left:1302.3px;top:333.5px;letter-spacing:0.116px">CertificationHandleCertificationProxyAvatarHandleAvatarModelTrainHandleTrainProxyRoomHandle</div>
<div class="il" style="left:1302.3px;top:348.5px;letter-spacing:-0.002px">RoomProxyQualifyingHandleQualifyingProxy_SongLibHandle_SongLibModelRegisterMacroCommandSettin</div>
<div class="il" style="left:1302.3px;top:363.5px;letter-spacing:-0.074px">gCommand_FriendCommand_ChatCommand_LobbyChatCommandGuildCommandCertificationCommandA</div>
<div class="il" style="left:1302.3px;top:378.5px;letter-spacing:0.010px">chievementCommandActivityCommandAIChannelCommandGachaCommandActionCardCommandRoomOp</div>
<div class="il" style="left:1302.3px;top:393.5px;letter-spacing:-0.034px">erateCommandAvatarCommandTrainCommandQualifyingCommand_SongLibCommandRechargeCommand</div>
<div class="il" style="left:1302.3px;top:408.5px;letter-spacing:0.012px">ObjectCSUnityEngineGameObject)</div>
<div class="il" style="left:1302.3px;top:453.7px;letter-spacing:0.403px">!!!!!"""""$$$$$%%%%%'''''(((((*****+++++-----.....0000022222333335555566666888889999;;;;;&lt;&lt;&lt;&lt;&lt;&gt;</div>
<div class="il" style="left:1302.3px;top:468.7px;letter-spacing:-0.238px">&gt;&gt;&gt;&gt;?????AAAAABBBBBDDDDDEEEEEGGGGGHHHHHIIIIIJJJJJKKKKKLLLLLMMMMMNNNNNOOOOOPP</div>
<div class="il" style="left:1302.3px;top:483.7px;letter-spacing:-0.360px">PPPQQQQQRRRRRSSSSSTTTTTUUUUUVVVVVWWWWW[[[[[\\\\\_ENV</div>
<div class="a" style="left:0;top:797px;width:1904px;height:22px;background:#151515"></div>
<svg class="a" style="left:5.3px;top:800.7px" width="11" height="13" viewBox="0 0 11 13"><path d="M3 0 H8 L11 3.2 V9.8 L8 13 H3 L0 9.8 V3.2Z" fill="#d0453f"/><path d="M4.7 2.4 H6.3 L5.95 8.4 H5.05Z" fill="#2a0e0e"/><circle cx="5.5" cy="10.1" r=".85" fill="#2a0e0e"/></svg>
<div class="t" style="left:20.4px;top:801px;font-size:12.5px;letter-spacing:.084px;color:#ae2424">LuaException: D:/trunk2019/client/Assets/ResourceWorks/lua/MuxicMain.lua.txt: cannot load incompatible bytecode</div>
</div>
<svg class="a" style="left:1938px;top:0" width="20" height="10" viewBox="0 0 20 10"><path d="M1 0 H9 L8.5 5 Z" fill="#f2d67a"/><path d="M8.5 0 H20 V8.5 L8.5 4.5Z" fill="#f1f1f1"/></svg>
<div class="dl" style="left:1940.3px;top:11.5px;letter-spacing:-0.6px">XLu</div>
<div class="a" style="left:1938.5px;top:65px;width:26px;height:40px;background:#fcfcfc;border:1px solid #d4d4d4;border-radius:1px"></div>
<div class="dl" style="left:1920.2px;top:112.9px;letter-spacing:0.1px">VS2013</div>
<div class="dl" style="left:1920.2px;top:129.1px;letter-spacing:0">简体版.</div>
<div class="a" style="left:1937.2px;top:164.3px;width:26px;height:43px;background:#fafafa;border:1px solid #b8b8b8;border-radius:3px"></div>
<div class="a" style="left:1942px;top:195px;width:18px;height:7.5px;border:1px solid #c4c4c4;border-right:0"></div><div class="a" style="left:1942px;top:198.4px;width:18px;height:1px;background:#c4c4c4"></div><div class="a" style="left:1950px;top:195px;width:1px;height:7px;background:#c4c4c4"></div>
<div class="a" style="left:1934px;top:170px;width:19.7px;height:19.8px;background:#f8fff5;border:1.6px solid #5cba50;border-radius:3px"></div>
<div class="a" style="left:1934px;top:170px;width:19.7px;height:19.8px;color:#44b038;font-weight:bold;font-size:19px;line-height:19.5px;text-align:center">S</div>
<div class="dl" style="left:1922.0px;top:214.0px;letter-spacing:0.4px">rechar</div>
<svg class="a" style="left:1930px;top:264px" width="28" height="44" viewBox="0 0 28 44"><path d="M6 1 L28 3 V12 L1.5 12Z" fill="#3aa6e6"/><rect x="1.5" y="12" width="26.5" height="11" fill="#1a78c6"/><rect x="1.5" y="23" width="26.5" height="9.5" fill="#e25a38"/><rect x="1.5" y="32.5" width="26.5" height="10.5" fill="#4caf3c"/><rect x="20" y="2" width="8" height="41" fill="#9c5426"/><rect x="17.5" y="19" width="10.5" height="10" rx="1" fill="#d9d2c8"/><rect x="20" y="21.5" width="8" height="5" fill="#8a4a22"/></svg>
<svg class="a" style="left:1931.0px;top:298.5px" width="12" height="12" viewBox="0 0 12 12"><rect x="0.5" y="0.5" width="11" height="11" fill="#f4f7fb" stroke="#c8d0dc" stroke-width="1"/><path d="M3 10 Q3 5.4 7 5.2 V3 L10.2 6.2 L7 9.2 V7.2 Q4.6 7.2 3 10Z" fill="#2a5fb8"/></svg>
<div class="dl" style="left:1942.0px;top:314.3px;letter-spacing:0">好压</div>
<svg class="a" style="left:1934px;top:365px" width="24" height="45" viewBox="0 0 24 45"><path d="M1 9 L10 4 L16 2 L24 5 V43 L12 44 L6 40Z" fill="#e4e7ea"/><path d="M1 9 L12 13 L24 11 V14 L12 16 L2 12Z" fill="#f7f8f9"/><path d="M6 4 L12 0.5 L19 3 L24 2 V9 L12 12 L4 8Z" fill="#f3f4f5"/><path d="M2 12 L6 40 L12 44 L12 16Z" fill="#d3d8dc"/><circle cx="13" cy="26" r="5.2" fill="none" stroke="#2a86e2" stroke-width="3.2" stroke-dasharray="7.4 3.5"/></svg>
<div class="dl" style="left:1936.7px;top:415.4px;letter-spacing:0">回收</div>
<div class="a" style="left:1930px;top:465px;width:28px;height:47px;background:linear-gradient(160deg,#202020,#050505)"></div>
<svg class="a" style="left:1938px;top:472px" width="20" height="34" viewBox="0 0 20 34"><path d="M20 4.5 L4 17 L20 29.5" fill="none" stroke="#fff" stroke-width="4.2" stroke-linejoin="miter"/><path d="M5 17 H20 M12.5 17 L20 10.5" fill="none" stroke="#fff" stroke-width="2.4"/></svg>
<svg class="a" style="left:1930.7px;top:499.8px" width="12" height="12" viewBox="0 0 12 12"><rect x="0.5" y="0.5" width="11" height="11" fill="#f4f7fb" stroke="#c8d0dc" stroke-width="1"/><path d="M3 10 Q3 5.4 7 5.2 V3 L10.2 6.2 L7 9.2 V7.2 Q4.6 7.2 3 10Z" fill="#2a5fb8"/></svg>
<div class="dl" style="left:1939.1px;top:517.5px;letter-spacing:0.4px">Uni</div>
<div class="dl" style="left:1922.4px;top:533.1px;letter-spacing:0.4px">2019.3</div>
<svg class="a" style="left:1938px;top:570px" width="20" height="43" viewBox="0 0 20 43"><path d="M1 3 L8 0.5 V39 L1 33Z" fill="#f6e09a"/><path d="M8 2 H20 V41 H8Z" fill="#efcf6a"/><rect x="9.5" y="6" width="10.5" height="10" fill="#3b98dc"/><rect x="9.5" y="16" width="10.5" height="9" fill="#e2683c"/><rect x="9.5" y="25" width="10.5" height="9" fill="#58b044"/><rect x="11.5" y="5" width="3.2" height="30" fill="#8e4e26"/><rect x="10.6" y="16" width="5" height="5" fill="#d8d0c4"/></svg>
<div class="dl" style="left:1919.5px;top:618.0px;letter-spacing:0.4px">Unity20</div>
<div class="a" style="left:1932.6px;top:670px;width:32px;height:41.6px;background:linear-gradient(180deg,#318ff4,#1f7be4);border-radius:5px"></div>
<svg class="a" style="left:1939px;top:681px" width="19" height="23" viewBox="0 0 19 23"><path d="M2 3.5 L8.2 19 L13 8 L17.6 19 L19 16" fill="none" stroke="#fff" stroke-width="3.4" stroke-linejoin="miter"/></svg>
<svg class="a" style="left:1931.0px;top:702.2px" width="12" height="12" viewBox="0 0 12 12"><rect x="0.5" y="0.5" width="11" height="11" fill="#f4f7fb" stroke="#c8d0dc" stroke-width="1"/><path d="M3 10 Q3 5.4 7 5.2 V3 L10.2 6.2 L7 9.2 V7.2 Q4.6 7.2 3 10Z" fill="#2a5fb8"/></svg>
<div class="dl" style="left:1922.6px;top:718.8px;letter-spacing:0.4px">WPS O</div>
<svg class="a" style="left:1937px;top:772px" width="21" height="43" viewBox="0 0 21 43"><path d="M9 3 H21 V40 H9Z" fill="#f1d272"/><path d="M1 1 L9 3.5 V42 L1 35Z" fill="#f8e5a4"/><path d="M9 3.5 V42" stroke="#e2be58" stroke-width="0.8"/></svg>
<div class="dl" style="left:1938.5px;top:820.3px;letter-spacing:0.4px">BM</div>
<div class="red" style="left:187px;top:260px;width:94px;height:94px"></div>
<div class="red" style="left:1292px;top:52px;width:400px;height:473px"></div>
<div class="red" style="left:6px;top:781px;width:718px;height:47px"></div>
<div class="a" style="left:0;top:354px;width:2px;height:8px;background:#d5e0f2"></div><div class="a" style="left:0;top:361px;width:3px;height:1.5px;background:#7ea6e8"></div>
</div>
</body></html>
